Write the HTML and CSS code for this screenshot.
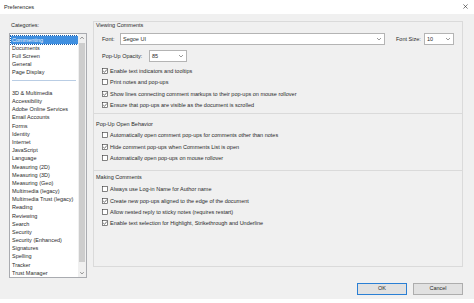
FILE: index.html
```html
<!DOCTYPE html>
<html lang="en">
<head>
<meta charset="utf-8">
<title>Preferences</title>
<link rel="stylesheet" href="styles.css">
</head>
<body>
<div class="window">
  <div class="titlebar">
    <span class="title">Preferences</span>
    <svg class="close" viewBox="0 0 6 6"><path d="M0.5 0.5 L5.5 5.5 M5.5 0.5 L0.5 5.5" stroke="#222" stroke-width="0.7"/></svg>
  </div>
  <div class="dialog">
    <div class="main">
      <div class="left">
        <div class="cat-label">Categories:</div>
        <div class="listbox">
          <ul class="items">
            <li class="sel"><span>Commenting</span></li>
            <li>Documents</li>
            <li>Full Screen</li>
            <li>General</li>
            <li>Page Display</li>
            <li class="sep"></li>
            <li>3D &amp; Multimedia</li>
            <li>Accessibility</li>
            <li>Adobe Online Services</li>
            <li>Email Accounts</li>
            <li>Forms</li>
            <li>Identity</li>
            <li>Internet</li>
            <li>JavaScript</li>
            <li>Language</li>
            <li>Measuring (2D)</li>
            <li>Measuring (3D)</li>
            <li>Measuring (Geo)</li>
            <li>Multimedia (legacy)</li>
            <li>Multimedia Trust (legacy)</li>
            <li>Reading</li>
            <li>Reviewing</li>
            <li>Search</li>
            <li>Security</li>
            <li>Security (Enhanced)</li>
            <li>Signatures</li>
            <li>Spelling</li>
            <li>Tracker</li>
            <li>Trust Manager</li>
            <li class="partial">Updater</li>
          </ul>
          <div class="scrollbar">
            <svg class="arrow" viewBox="0 0 8 8"><path d="M2.3 4.8 L4 3.1 L5.7 4.8" fill="none" stroke="#606060" stroke-width="0.7"/></svg>
            <span class="thumb"></span>
            <svg class="arrow down" viewBox="0 0 8 8"><path d="M2.3 3.2 L4 4.9 L5.7 3.2" fill="none" stroke="#606060" stroke-width="0.7"/></svg>
          </div>
        </div>
      </div>
      <div class="panel">
        <section class="group g1">
          <div class="gtitle">Viewing Comments</div>
          <div class="row font-row">
            <span class="lbl font-lbl">Font:</span>
            <div class="combo font-combo"><span class="val">Segoe UI</span><svg class="chev" viewBox="0 0 8 8"><path d="M2 3 L4 5 L6 3" fill="none" stroke="#707070" stroke-width="0.7"/></svg></div>
            <span class="lbl size-lbl">Font Size:</span>
            <div class="combo size-combo"><span class="val">10</span><svg class="chev" viewBox="0 0 8 8"><path d="M2 3 L4 5 L6 3" fill="none" stroke="#707070" stroke-width="0.7"/></svg></div>
          </div>
          <div class="row op-row">
            <span class="lbl op-lbl">Pop-Up Opacity:</span>
            <div class="combo op-combo"><span class="val">85</span><svg class="chev" viewBox="0 0 8 8"><path d="M2 3 L4 5 L6 3" fill="none" stroke="#707070" stroke-width="0.7"/></svg></div>
          </div>
          <div class="checks c1">
            <label class="check"><svg class="cb" viewBox="0 0 6 6"><rect x="0.5" y="0.5" width="5" height="5" fill="#fff" stroke="#333" stroke-width="0.6"/><path d="M1.2 3 L2.5 4.3 L4.9 1.5" fill="none" stroke="#333" stroke-width="0.7"/></svg><span>Enable text indicators and tooltips</span></label>
            <label class="check"><svg class="cb" viewBox="0 0 6 6"><rect x="0.5" y="0.5" width="5" height="5" fill="#fff" stroke="#333" stroke-width="0.6"/></svg><span>Print notes and pop-ups</span></label>
            <label class="check"><svg class="cb" viewBox="0 0 6 6"><rect x="0.5" y="0.5" width="5" height="5" fill="#fff" stroke="#333" stroke-width="0.6"/><path d="M1.2 3 L2.5 4.3 L4.9 1.5" fill="none" stroke="#333" stroke-width="0.7"/></svg><span>Show lines connecting comment markups to their pop-ups on mouse rollover</span></label>
            <label class="check"><svg class="cb" viewBox="0 0 6 6"><rect x="0.5" y="0.5" width="5" height="5" fill="#fff" stroke="#333" stroke-width="0.6"/><path d="M1.2 3 L2.5 4.3 L4.9 1.5" fill="none" stroke="#333" stroke-width="0.7"/></svg><span>Ensure that pop-ups are visible as the document is scrolled</span></label>
          </div>
        </section>
        <section class="group g2">
          <div class="gtitle">Pop-Up Open Behavior</div>
          <div class="checks c2">
            <label class="check"><svg class="cb" viewBox="0 0 6 6"><rect x="0.5" y="0.5" width="5" height="5" fill="#fff" stroke="#333" stroke-width="0.6"/></svg><span>Automatically open comment pop-ups for comments other than notes</span></label>
            <label class="check"><svg class="cb" viewBox="0 0 6 6"><rect x="0.5" y="0.5" width="5" height="5" fill="#fff" stroke="#333" stroke-width="0.6"/><path d="M1.2 3 L2.5 4.3 L4.9 1.5" fill="none" stroke="#333" stroke-width="0.7"/></svg><span>Hide comment pop-ups when Comments List is open</span></label>
            <label class="check"><svg class="cb" viewBox="0 0 6 6"><rect x="0.5" y="0.5" width="5" height="5" fill="#fff" stroke="#333" stroke-width="0.6"/></svg><span>Automatically open pop-ups on mouse rollover</span></label>
          </div>
        </section>
        <section class="group g3">
          <div class="gtitle">Making Comments</div>
          <div class="checks c3">
            <label class="check"><svg class="cb" viewBox="0 0 6 6"><rect x="0.5" y="0.5" width="5" height="5" fill="#fff" stroke="#333" stroke-width="0.6"/></svg><span>Always use Log-in Name for Author name</span></label>
            <label class="check"><svg class="cb" viewBox="0 0 6 6"><rect x="0.5" y="0.5" width="5" height="5" fill="#fff" stroke="#333" stroke-width="0.6"/><path d="M1.2 3 L2.5 4.3 L4.9 1.5" fill="none" stroke="#333" stroke-width="0.7"/></svg><span>Create new pop-ups aligned to the edge of the document</span></label>
            <label class="check"><svg class="cb" viewBox="0 0 6 6"><rect x="0.5" y="0.5" width="5" height="5" fill="#fff" stroke="#333" stroke-width="0.6"/></svg><span>Allow nested reply to sticky notes (requires restart)</span></label>
            <label class="check"><svg class="cb" viewBox="0 0 6 6"><rect x="0.5" y="0.5" width="5" height="5" fill="#fff" stroke="#333" stroke-width="0.6"/><path d="M1.2 3 L2.5 4.3 L4.9 1.5" fill="none" stroke="#333" stroke-width="0.7"/></svg><span>Enable text selection for Highlight, Strikethrough and Underline</span></label>
          </div>
        </section>
      </div>
    </div>
    <div class="buttons">
      <button class="btn default">OK</button>
      <button class="btn">Cancel</button>
    </div>
  </div>
</div>
</body>
</html>
```

FILE: styles.css
```css
* { box-sizing: border-box; }
html, body { margin: 0; padding: 0; }
body {
  width: 474px;
  height: 303px;
  overflow: hidden;
  background: #ffffff;
  font-family: "Liberation Sans", Arial, sans-serif;
  font-size: 5.5px;
  color: #2a2a2a;
}
.window { width: 474px; }
.titlebar {
  height: 14px;
  background: #ffffff;
  display: flex;
  align-items: center;
  justify-content: space-between;
  padding: 0 6px 1px 4px;
}
.title { font-size: 5.6px; line-height: 8px; color: #2a2a2a; }
.close { width: 5px; height: 5px; display: block; }
.dialog {
  height: 285px;
  background: #f0f0f0;
  padding: 7px 11px 0 9px;
}
.main { display: flex; gap: 6px; height: 246px; }
.left { width: 78px; flex: none; }
.cat-label { height: 12px; line-height: 8px; padding-left: 2px; }
.listbox {
  height: 245px;
  background: #fff;
  border: 1px solid #a9abb0;
  display: flex;
  overflow: hidden;
}
.items {
  list-style: none;
  margin: 0;
  padding: 1.5px 0 0 0;
  flex: 1;
  min-width: 0;
  overflow: hidden;
}
.items li {
  height: 8.18px;
  line-height: 8.18px;
  padding-left: 2px;
  white-space: nowrap;
}
.items li.partial { height: 5px; overflow: hidden; line-height: 8.18px; }
.items li.sel { padding-left: 1px; }
.items li.sel span {
  display: block;
  background: #3f8fe0;
  color: #e8f0fb;
  padding-left: 1px;
  outline: 0.5px dotted #1d5ea8;
  outline-offset: -0.5px;
}
.items li.sep { height: 8.6px; }
.items li.sep::after {
  content: "";
  display: block;
  margin: 4px 2px 0 0;
  height: 1px;
  background: #b9cde4;
}
.scrollbar {
  width: 8px;
  flex: none;
  background: #f0f0f0;
  display: flex;
  flex-direction: column;
}
.arrow { width: 8px; height: 8px; display: block; flex: none; }
.thumb {
  display: block;
  margin: 1px 1px 0 1px;
  height: 219px;
  background: #cdcdcd;
}
.arrow.down { margin-top: auto; }
.panel {
  width: 370px;
  flex: none;
  height: 246px;
  border: 1px solid #dadada;
  display: flex;
  flex-direction: column;
}
.group { padding-left: 2px; }
.gtitle { height: 7px; line-height: 7px; white-space: nowrap; }
.g1 { height: 91px; }
.g2 { height: 57px; border-top: 1px solid #dadada; padding-top: 6px; }
.g3 { flex: 1; border-top: 1px solid #dadada; padding-top: 1.7px; }
.g2 .gtitle, .g3 .gtitle { height: 8px; line-height: 8px; }
.row { display: flex; align-items: center; padding-left: 6px; }
.font-row { height: 12px; margin-top: 4px; }
.op-row { height: 11.5px; margin-top: 5px; }
.lbl { white-space: nowrap; }
.font-lbl { width: 18px; flex: none; }
.size-lbl { width: 28px; margin-left: 11px; flex: none; }
.op-lbl { width: 47px; flex: none; }
.combo {
  height: 100%;
  background: #fff;
  border: 1px solid #b4b4b4;
  display: flex;
  align-items: center;
  justify-content: space-between;
  padding: 0 1px 0 2px;
}
.font-combo { width: 265px; }
.size-combo { width: 30px; }
.op-combo { width: 38px; height: 11.5px; }
.chev { width: 8px; height: 8px; display: block; }
.checks { padding-left: 6px; }
.c1 { margin-top: 3.5px; }
.c2 { margin-top: 1.5px; }
.c3 { margin-top: 2.9px; }
.check {
  display: flex;
  align-items: center;
  gap: 2px;
  height: 11.5px;
  white-space: nowrap;
}
.c2 .check { height: 11.6px; }
.c3 .check { height: 11.33px; }
.cb { width: 6px; height: 6px; display: block; flex: none; }
.buttons {
  display: flex;
  justify-content: flex-end;
  gap: 6px;
  margin-top: 16px;
}
.btn {
  width: 50px;
  height: 11.5px;
  padding: 0;
  font-family: inherit;
  font-size: 5.5px;
  line-height: 9px;
  color: #2a2a2a;
  background: #e1e1e1;
  border: 1px solid #adadad;
  border-radius: 0;
}
.btn.default { border-color: #2a7fd4; }
```
